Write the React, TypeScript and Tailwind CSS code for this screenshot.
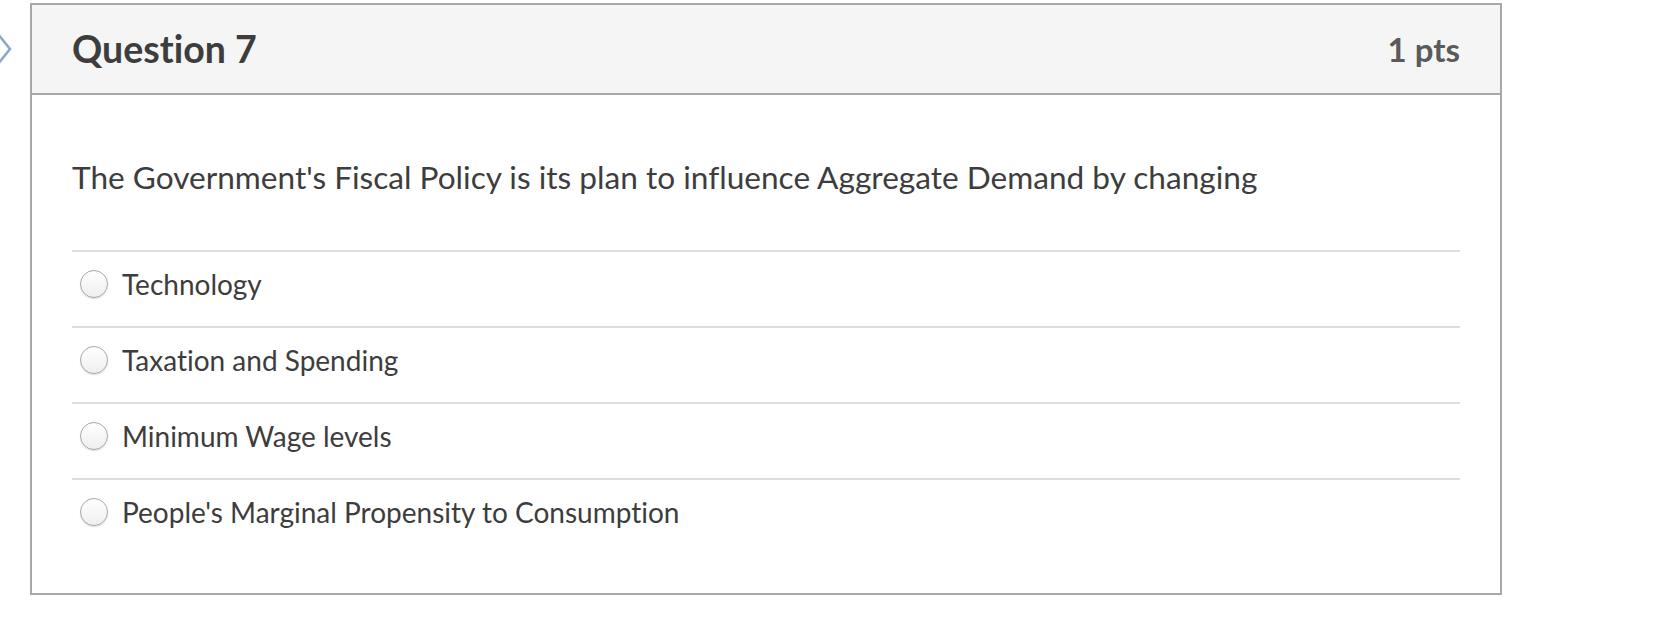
import React from "react";

const options = [
  "Technology",
  "Taxation and Spending",
  "Minimum Wage levels",
  "People's Marginal Propensity to Consumption",
];

function Radio() {
  return (
    <div className="mt-[7px] h-[28px] w-[28px] shrink-0 rounded-full border border-[#a9a9a9] bg-gradient-to-b from-[#ffffff] to-[#efefef] shadow-[0_1px_1px_rgba(0,0,0,0.15)]" />
  );
}

export default function App() {
  return (
    <div className="flex min-h-[630px] bg-white pt-[3px] font-[Lato,sans-serif] text-[#3d3d3d] [font-variant-ligatures:none]">
      <div className="w-[30px] shrink-0">
        <svg width="30" height="70" viewBox="0 0 30 70" className="block">
          <polyline
            points="-2,31 10,46 -2,61"
            fill="none"
            stroke="#8aa9c4"
            strokeWidth="2.6"
            strokeLinejoin="round"
          />
        </svg>
      </div>
      <div className="w-[1472px] self-start border-2 border-[#a8a8a8]">
        <div className="flex h-[90px] items-center justify-between border-b-2 border-[#a8a8a8] bg-[#f5f5f5] px-10">
          <h2 className="text-[37.5px] font-bold leading-[88px] text-[#3d3d3d]">Question 7</h2>
          <span className="text-[33px] font-bold leading-[88px] text-[#5a5a5a]">1 pts</span>
        </div>
        <div className="px-10 pt-[60px] pb-[39px]">
          <p className="text-[31.6px] leading-[45px]">
            The Government's Fiscal Policy is its plan to influence Aggregate Demand by changing
          </p>
          <div className="mt-[50px]">
            {options.map((o) => (
              <div
                key={o}
                className="flex h-[76px] items-start gap-[14px] border-t-2 border-[#dddddd] pl-2 pt-[11px]"
              >
                <Radio />
                <span className="text-[28px] leading-[42px]">{o}</span>
              </div>
            ))}
          </div>
        </div>
      </div>
    </div>
  );
}
